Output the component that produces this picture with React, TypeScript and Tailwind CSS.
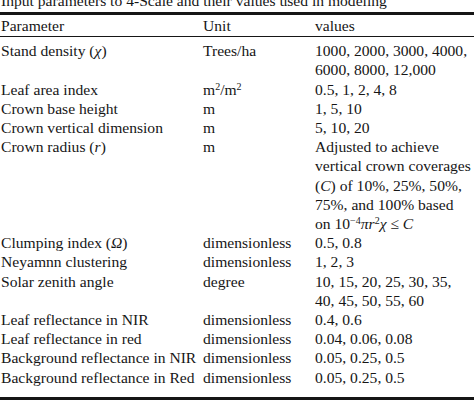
import type { ReactNode } from "react";

interface Row {
  param: ReactNode;
  unit: ReactNode;
  values: ReactNode[];
}

const rows: Row[] = [
  {
    param: (
      <>
        Stand density (<i>χ</i>)
      </>
    ),
    unit: "Trees/ha",
    values: ["1000, 2000, 3000, 4000,", "6000, 8000, 12,000"],
  },
  {
    param: "Leaf area index",
    unit: (
      <>
        m<sup className="text-[10px]">2</sup>/m<sup className="text-[10px]">2</sup>
      </>
    ),
    values: ["0.5, 1, 2, 4, 8"],
  },
  { param: "Crown base height", unit: "m", values: ["1, 5, 10"] },
  { param: "Crown vertical dimension", unit: "m", values: ["5, 10, 20"] },
  {
    param: (
      <>
        Crown radius (<i>r</i>)
      </>
    ),
    unit: "m",
    values: [
      "Adjusted to achieve",
      "vertical crown coverages",
      <>
        (<i>C</i>) of 10%, 25%, 50%,
      </>,
      "75%, and 100% based",
      <>
        on 10<sup className="text-[10px]">−4</sup>
        <i>πr</i>
        <sup className="text-[10px]">2</sup>
        <i>χ</i> ≤ <i>C</i>
      </>,
    ],
  },
  {
    param: (
      <>
        Clumping index (<i>Ω</i>)
      </>
    ),
    unit: "dimensionless",
    values: ["0.5, 0.8"],
  },
  { param: "Neyamnn clustering", unit: "dimensionless", values: ["1, 2, 3"] },
  {
    param: "Solar zenith angle",
    unit: "degree",
    values: ["10, 15, 20, 25, 30, 35,", "40, 45, 50, 55, 60"],
  },
  { param: "Leaf reflectance in NIR", unit: "dimensionless", values: ["0.4, 0.6"] },
  { param: "Leaf reflectance in red", unit: "dimensionless", values: ["0.04, 0.06, 0.08"] },
  { param: "Background reflectance in NIR", unit: "dimensionless", values: ["0.05, 0.25, 0.5"] },
  { param: "Background reflectance in Red", unit: "dimensionless", values: ["0.05, 0.25, 0.5"] },
];

export default function App() {
  return (
    <div
      className="h-[402px] w-[474px] overflow-hidden bg-white text-[15.6px] leading-[19.2px] text-[#161616]"
      style={{ fontFamily: '"Liberation Serif", "Times New Roman", serif' }}
    >
      <p className="-mt-[9px] h-[21px] whitespace-nowrap pl-[1px]">
        Input parameters to 4-Scale and their values used in modeling
      </p>
      {/* header */}
      <div className="grid grid-cols-[203px_112px_1fr] border-t-[3px] border-b border-[#161616] pt-[1px] pb-[1px]">
        <span className="pl-[1px]">Parameter</span>
        <span>Unit</span>
        <span>values</span>
      </div>
      {/* body */}
      <div className="grid grid-cols-[203px_112px_1fr] border-b-[3px] border-[#161616] pt-[4px] pb-[10px]">
        {rows.map((row, i) => (
          <div key={i} className="contents">
            <div className="whitespace-nowrap pl-[1px]">{row.param}</div>
            <div className="whitespace-nowrap">{row.unit}</div>
            <div className="whitespace-nowrap">
              {row.values.map((v, j) => (
                <div key={j}>{v}</div>
              ))}
            </div>
          </div>
        ))}
      </div>
    </div>
  );
}
